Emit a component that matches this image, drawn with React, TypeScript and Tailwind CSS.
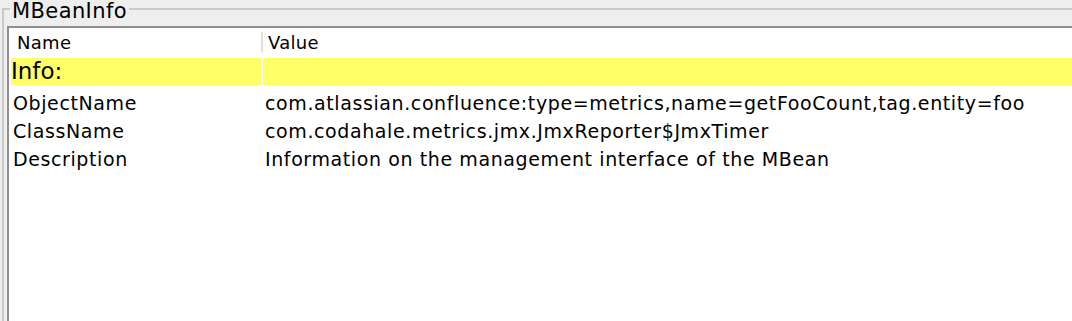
export default function App() {
  const rows = [
    ["ObjectName", "com.atlassian.confluence:type=metrics,name=getFooCount,tag.entity=foo"],
    ["ClassName", "com.codahale.metrics.jmx.JmxReporter$JmxTimer"],
    ["Description", "Information on the management interface of the MBean"],
  ];

  return (
    <div
      className="w-[1072px] h-[321px] overflow-hidden bg-[#eeeeee] text-black pl-[2px]"
      style={{ fontFamily: '"DejaVu Sans", "Noto Sans", sans-serif' }}
    >
      <fieldset className="h-[400px] border-t-2 border-l-2 border-t-[#c9c9c9] border-l-[#c9c9c9] pl-[3px] pt-0">
        <legend className="ml-[3px] px-[2px] text-[21px] leading-[17px] tracking-[0.4px]">
          <span className="relative top-[3px]">MBeanInfo</span>
        </legend>
        <div className="mt-[9px] h-[400px] border-t-2 border-l-2 border-[#8f8f8f] bg-white pl-[2px]">
          <div className="flex h-[28px] items-center text-[18px] tracking-[0.3px]">
            <div className="w-[250px] pl-[6px]">Name</div>
            <div className="h-[20px] w-[2px] bg-[#e0e0e0]" />
            <div className="pl-[5px]">Value</div>
          </div>
          <div className="mt-[2px] flex h-[27px] items-center gap-[2px] text-[23px]">
            <div className="h-full w-[250px] bg-[#ffff66] pl-0 leading-[27px]">Info:</div>
            <div className="h-full flex-1 bg-[#ffff66]" />
          </div>
          <div className="pt-[4px] text-[19px] tracking-[0.6px]">
            {rows.map(([name, value]) => (
              <div key={name} className="flex h-[28px] items-center">
                <div className="w-[252px] pl-[2px]">{name}</div>
                <div className="pl-[2px]">{value}</div>
              </div>
            ))}
          </div>
        </div>
      </fieldset>
    </div>
  );
}
